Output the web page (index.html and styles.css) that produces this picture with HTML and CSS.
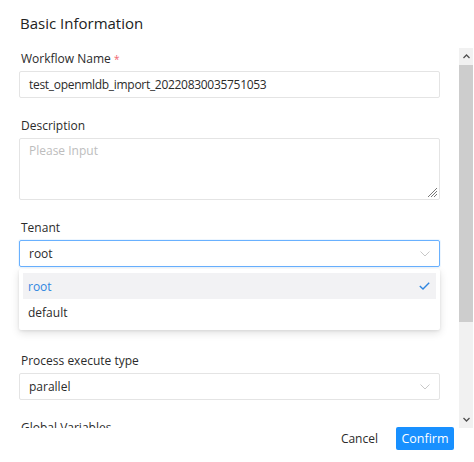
FILE: index.html
```html
<!DOCTYPE html>
<html lang="en">
<head>
<meta charset="utf-8">
<title>Basic Information</title>
<link rel="stylesheet" href="styles.css">
</head>
<body>
<div class="modal">
  <div class="modal-header">Basic Information</div>
  <div class="modal-body">
    <div class="form">
      <div class="field">
        <div class="label">Workflow Name <span class="req">*</span></div>
        <div class="input"><span class="value tight">test_openmldb_import_20220830035751053</span></div>
      </div>
      <div class="field">
        <div class="label">Description</div>
        <div class="textarea">
          <span class="placeholder">Please Input</span>
          <svg class="resize" width="11" height="11" viewBox="0 0 11 11"><path d="M10 1 L1 10 M10 4 L4 10 M10 7 L7 10" stroke="#777" stroke-width="1" fill="none"/></svg>
        </div>
      </div>
      <div class="field tenant">
        <div class="label">Tenant</div>
        <div class="select focused">
          <span class="value">root</span>
          <svg class="chev" width="10" height="6" viewBox="0 0 10 6"><path d="M0.5 0.5 L5 5 L9.5 0.5" stroke="#c8c8c8" stroke-width="1" fill="none"/></svg>
        </div>
        <div class="dropdown">
          <div class="option selected"><span>root</span>
            <svg width="11" height="8" viewBox="0 0 11 8"><path d="M0.8 4 L4 7 L10.2 0.8" stroke="#2f86e0" stroke-width="1.4" fill="none"/></svg>
          </div>
          <div class="option"><span>default</span></div>
        </div>
      </div>
      <div class="gap-under-menu"></div>
      <div class="field">
        <div class="label">Process execute type</div>
        <div class="select">
          <span class="value">parallel</span>
          <svg class="chev" width="10" height="6" viewBox="0 0 10 6"><path d="M0.5 0.5 L5 5 L9.5 0.5" stroke="#c8c8c8" stroke-width="1" fill="none"/></svg>
        </div>
      </div>
      <div class="field">
        <div class="label">Global Variables</div>
      </div>
    </div>
    <div class="scrollbar">
      <div class="sb-btn"><svg width="7" height="5" viewBox="0 0 7 5"><path d="M0.5 4 L3.5 1 L6.5 4" stroke="#505050" stroke-width="1.3" fill="none"/></svg></div>
      <div class="sb-thumb"></div>
      <div class="sb-track"></div>
      <div class="sb-btn"><svg width="7" height="5" viewBox="0 0 7 5"><path d="M0.5 1 L3.5 4 L6.5 1" stroke="#505050" stroke-width="1.3" fill="none"/></svg></div>
    </div>
  </div>
  <div class="modal-footer">
    <button class="btn btn-text">Cancel</button>
    <button class="btn btn-primary">Confirm</button>
  </div>
</div>
</body>
</html>
```

FILE: styles.css
```css
html, body {
  margin: 0;
  padding: 0;
  background: #ffffff;
}
body {
  font-family: "Open Sans", "Noto Sans", "Liberation Sans", sans-serif;
  color: #2b2b2b;
  width: 474px;
  height: 462px;
  overflow: hidden;
}
.modal {
  display: flex;
  flex-direction: column;
  height: 462px;
}
.modal-header {
  height: 48px;
  box-sizing: border-box;
  padding: 12px 0 0 20px;
  font-size: 15px;
  line-height: 22px;
  color: #222;
}
.modal-body {
  height: 380px;
  display: flex;
  overflow: hidden;
}
.form {
  flex: 1;
  padding-left: 19px;
  padding-right: 19px;
}
.field {
  margin-bottom: 17px;
}
.tenant {
  position: relative;
  margin-bottom: 0;
}
.label {
  font-size: 12px;
  line-height: 22px;
  height: 22px;
  padding-left: 2px;
  margin-bottom: 1px;
  color: #2b2b2b;
}
.req {
  color: #f0646e;
  font-size: 10px;
  line-height: 1;
}
.input, .select {
  height: 27px;
  box-sizing: border-box;
  border: 1px solid #e4e4e4;
  border-radius: 2px;
  padding-left: 9px;
  padding-right: 9px;
  font-size: 12px;
  line-height: 25px;
  color: #2b2b2b;
  display: flex;
  align-items: center;
  justify-content: space-between;
}
.value {
  display: block;
}
.tight {
  letter-spacing: -0.3px;
}
.select.focused {
  border-color: #69b1ff;
  box-shadow: 0 0 0 1px rgba(24, 144, 255, 0.08);
}
.textarea {
  position: relative;
  height: 62px;
  box-sizing: border-box;
  border: 1px solid #e4e4e4;
  border-radius: 2px;
  padding-top: 2px;
  padding-left: 9px;
  font-size: 12px;
  line-height: 20px;
}
.placeholder {
  color: #bdbdbd;
}
.resize {
  position: absolute;
  right: 1px;
  bottom: 1px;
}
.dropdown {
  position: absolute;
  left: 0;
  right: 0;
  top: 52px;
  z-index: 5;
  background: #fff;
  padding: 4px 4px;
  box-shadow: 0 3px 8px rgba(0, 0, 0, 0.12), 0 1px 3px rgba(0, 0, 0, 0.08);
  border-radius: 2px;
}
.option {
  height: 26px;
  display: flex;
  align-items: center;
  justify-content: space-between;
  padding: 0 6px 0 5px;
  font-size: 12px;
  color: #2b2b2b;
}
.option + .option {
  height: 27px;
}
.option.selected {
  background: #f2f2f4;
  color: #2f86e0;
}
.gap-under-menu {
  height: 83px;
}
.scrollbar {
  width: 14px;
  margin-right: 1px;
  display: flex;
  flex-direction: column;
  background: #f1f1f1;
}
.sb-btn {
  height: 17px;
  display: flex;
  align-items: center;
  justify-content: center;
  background: #f1f1f1;
}
.sb-thumb {
  height: 257px;
  background: #cdcdcd;
}
.sb-track {
  flex: 1;
}
.modal-footer {
  flex: 1;
  display: flex;
  justify-content: flex-end;
  align-items: flex-start;
  padding-right: 20px;
  gap: 3px;
}
.btn {
  font-family: inherit;
  font-size: 12px;
  height: 23px;
  border: none;
  border-radius: 2px;
  margin-top: -1px;
  padding: 0 15px;
  cursor: pointer;
}
.btn-text {
  background: transparent;
  color: #2b2b2b;
}
.btn-primary {
  background: #1890ff;
  color: #fff;
  padding: 0 4px;
  width: 58px;
  font-size: 12.5px;
}
```
